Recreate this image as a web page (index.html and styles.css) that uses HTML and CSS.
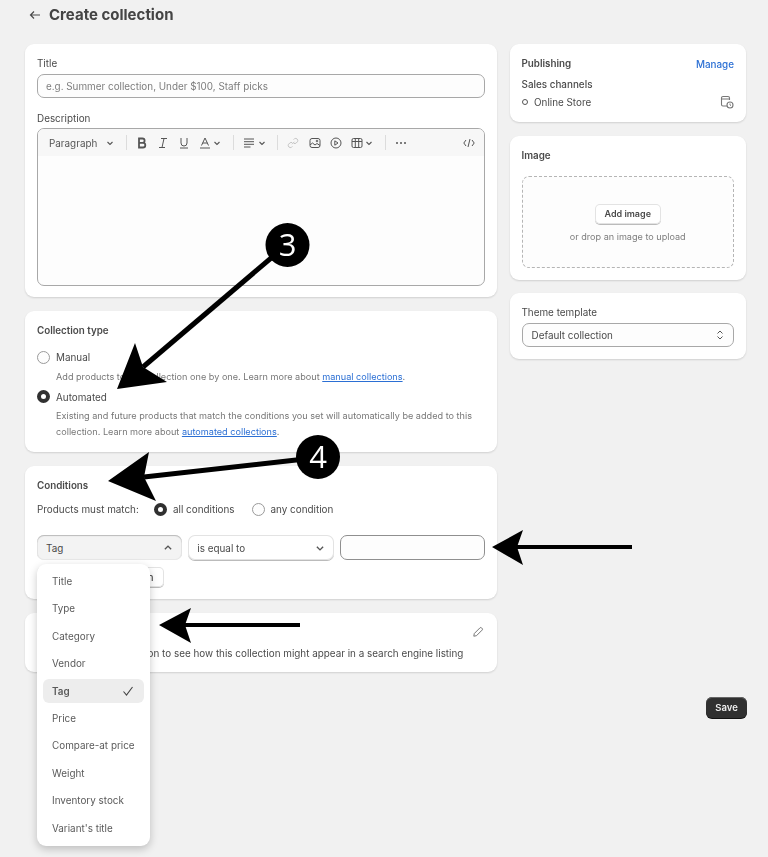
FILE: index.html
```html
<!DOCTYPE html>
<html lang="en">
<head>
<meta charset="utf-8">
<title>Create collection</title>
<link rel="stylesheet" href="styles.css">
</head>
<body>
<div class="page">
  <header class="head">
    <svg class="back" viewBox="0 0 12 12" width="12" height="12"><path d="M11 6H1.5M5 2.5 1.500 6 5 9.500" fill="none" stroke="#4a4a4a" stroke-width="1.200"/></svg>
    <h1>Create collection</h1>
  </header>
  <div class="columns">
    <main class="col">
      <section class="card card-main">
        <label class="label">Title</label>
        <div class="input placeholder">e.g. Summer collection, Under $100, Staff picks</div>
        <label class="label label-desc">Description</label>
        <div class="editor">
          <div class="toolbar">
            <span class="para">Paragraph</span>
            <svg class="chev para-chev" viewBox="0 0 8 8"><path d="M1.500 3 4 5.500 6.500 3"/></svg>
            <i class="sep sep1"></i>
            <svg class="ico" viewBox="0 0 12 12"><path class="bold" d="M3 1.500h3.400a2.200 2.200 0 0 1 0 4.400H3zM3 5.900h4a2.300 2.300 0 0 1 0 4.600H3z"/></svg>
            <svg class="ico" viewBox="0 0 12 12"><path d="M4 1.500h6M2 10.500h6M7 1.500l-2 9"/></svg>
            <svg class="ico" viewBox="0 0 12 12"><path d="M3 1v5a3 3 0 0 0 6 0V1M2 11h8"/></svg>
            <svg class="ico ico-a" viewBox="0 0 12 12"><path d="M2.500 8.500 6 1l3.500 7.500M3.600 6h4.800M1 11h10"/></svg>
            <svg class="chev" viewBox="0 0 8 8"><path d="M1.500 3 4 5.500 6.500 3"/></svg>
            <i class="sep sep2"></i>
            <svg class="ico ico-align" viewBox="0 0 12 12"><path d="M1 2h10M1 4.700h10M1 7.300h10M1 10h6.500"/></svg>
            <svg class="chev" viewBox="0 0 8 8"><path d="M1.500 3 4 5.500 6.500 3"/></svg>
            <i class="sep sep3"></i>
            <svg class="ico ico-off" viewBox="0 0 12 12"><path d="M5 7.200l2.400-2.400M6.600 2.600l.9-.9a2.200 2.200 0 0 1 3 3L9.200 6a2.200 2.200 0 0 1-2.400.4M5.400 9.400l-.9.9a2.200 2.200 0 0 1-3-3L2.800 6a2.200 2.200 0 0 1 2.400-.4"/></svg>
            <svg class="ico" viewBox="0 0 12 12"><rect x="1" y="1.500" width="10" height="9" rx="2"/><path d="M1 8l2.500-2 2.500 2 2-1.500L11 8.500"/><circle cx="8" cy="4" r=".8"/></svg>
            <svg class="ico" viewBox="0 0 12 12"><circle cx="6" cy="6" r="5"/><path d="M4.800 3.800 8 6 4.800 8.200z"/></svg>
            <svg class="ico ico-table" viewBox="0 0 12 12"><rect x="1" y="1.500" width="10" height="9" rx="1.500"/><path d="M1 4.500h10M4.300 1.500v9M7.700 1.500v9"/></svg>
            <svg class="chev" viewBox="0 0 8 8"><path d="M1.500 3 4 5.500 6.500 3"/></svg>
            <i class="sep sep4"></i>
            <svg class="ico" viewBox="0 0 12 12"><circle class="dot" cx="2" cy="6" r="1"/><circle class="dot" cx="6" cy="6" r="1"/><circle class="dot" cx="10" cy="6" r="1"/></svg>
            <svg class="ico code" viewBox="0 0 12 12"><path d="M3 3 .8 6 3 9M9 3l2.200 3L9 9M7 2 5 10"/></svg>
          </div>
          <div class="editor-body"></div>
        </div>
      </section>

      <section class="card card-type">
        <h2>Collection type</h2>
        <div class="radio-row first"><span class="radio"></span><span class="radio-text">Manual</span></div>
        <p class="help">Add products to this collection one by one. Learn more about <a href="#">manual collections</a>.</p>
        <div class="radio-row"><span class="radio on"></span><span class="radio-text">Automated</span></div>
        <p class="help">Existing and future products that match the conditions you set will automatically be added to this collection. Learn more about <a href="#">automated collections</a>.</p>
      </section>

      <section class="card card-cond">
        <h2>Conditions</h2>
        <div class="match">
          <span class="match-label">Products must match:</span>
          <span class="radio on"></span><span class="radio-text">all conditions</span>
          <span class="radio any"></span><span class="radio-text">any condition</span>
        </div>
        <div class="cond-row">
          <div class="select open"><span>Tag</span><svg class="chev big" viewBox="0 0 8 8"><path d="M1.500 5 4 2.500 6.500 5"/></svg></div>
          <div class="select"><span>is equal to</span><svg class="chev big" viewBox="0 0 8 8"><path d="M1.500 3 4 5.500 6.500 3"/></svg></div>
          <div class="input cond-input"></div>
          <ul class="menu">
            <li>Title</li><li>Type</li><li>Category</li><li>Vendor</li>
            <li class="active">Tag<svg viewBox="0 0 12 12" width="12" height="12"><path d="M1.500 6.500 4.500 10 10.500 2" fill="none" stroke="#444" stroke-width="1.100"/></svg></li>
            <li>Price</li><li>Compare-at price</li><li>Weight</li><li>Inventory stock</li><li>Variant's title</li>
          </ul>
        </div>
        <button class="btn add-cond">Add another condition</button>
      </section>

      <section class="card card-seo">
        <div class="seo-head">
          <h2>Search engine listing</h2>
          <svg class="pencil" viewBox="0 0 12 12" width="12" height="12"><path d="M1.800 10.200l.5-2.700 5.600-5.600a1.200 1.200 0 0 1 1.700 0l.5.5a1.200 1.200 0 0 1 0 1.700L4.500 9.700z" fill="none" stroke="#777" stroke-width="1"/></svg>
        </div>
        <p class="seo-text">Add a title and description to see how this collection might appear in a search engine listing</p>
      </section>
    </main>

    <aside class="col">
      <section class="card card-pub">
        <div class="pub-head"><h2>Publishing</h2><a class="manage" href="#">Manage</a></div>
        <div class="channels">Sales channels</div>
        <div class="store">
          <span class="store-dot"></span><span>Online Store</span>
          <svg class="cal" viewBox="0 0 14 14" width="14" height="14"><path d="M7 11H3a1.500 1.500 0 0 1-1.500-1.500V3A1.500 1.500 0 0 1 3 1.500h5A1.500 1.500 0 0 1 9.500 3v2M1.500 4h8" fill="none" stroke="#777" stroke-width="1.100"/><circle cx="10" cy="10" r="3" fill="none" stroke="#777" stroke-width="1.100"/><path d="M10 8.500V10l1 .7" fill="none" stroke="#777" stroke-width=".9"/></svg>
        </div>
      </section>
      <section class="card card-img">
        <h2>Image</h2>
        <div class="drop">
          <button class="btn add-img">Add image</button>
          <span class="drop-text">or drop an image to upload</span>
        </div>
      </section>
      <section class="card card-theme">
        <label class="label">Theme template</label>
        <div class="input theme-select"><span>Default collection</span>
          <svg viewBox="0 0 8 12" width="8" height="12"><path d="M1.500 4.500 4 2l2.500 2.500M1.500 7.500 4 10l2.500-2.500" fill="none" stroke="#555" stroke-width="1"/></svg>
        </div>
      </section>
    </aside>
  </div>
  <div class="actions"><button class="save">Save</button></div>

  <svg class="notes" viewBox="0 0 768 857" width="768" height="857">
    <path class="shaft" d="M143 367 277 253"/>
    <path d="M117 389 135 343 143 367 167 382z"/>
    <circle cx="287.500" cy="245" r="22"/>
    <text x="287.500" y="256" class="num">3</text>
    <path class="shaft" d="M144 477 305 459"/>
    <path d="M108 481 149 452 144 477 156 501z"/>
    <circle cx="318" cy="457" r="22"/>
    <text x="318" y="468" class="num">4</text>
    <path class="shaft thin" d="M517 547H632"/>
    <path d="M492 547 523 530 517 547 523 565z"/>
    <path class="shaft thin" d="M185 625H300"/>
    <path d="M159 625 191 608 185 625 191 643z"/>
  </svg>
</div>
</body>
</html>
```
FILE: styles.css
```css
* { box-sizing: border-box; }
html, body { margin: 0; height: 100%; }
body {
  background: #f1f1f1;
  color: #4a4a4a;
  font: 9.900px/14px Inter, "Liberation Sans", sans-serif;
  overflow: hidden;
}
.page { position: relative; width: 768px; height: 857px; padding: 0 22px 0 25px; filter: blur(0.45px); }
.head { display: flex; align-items: center; height: 44px; padding: 1px 0 15px 4px; }
.back { margin-right: 8px; }
h1 { margin: 0; font-size: 15px; font-weight: 700; line-height: 20px; color: #444; }
h2 { margin: 0 0 -2px; font-size: 9.800px; font-weight: 600; line-height: 16px; color: #4a4a4a; }
.columns { display: flex; gap: 13px; align-items: flex-start; }
.col { display: flex; flex-direction: column; gap: 14px; }
main.col { width: 472px; }
aside.col { width: 236px; gap: 13.500px; }
aside .card { padding-left: 11.500px; padding-right: 12px; }
.card { background: #fff; border-radius: 9px; box-shadow: 0 1px 2px rgba(0,0,0,.14); padding: 12px; }
.label { display: block; line-height: 14px; margin-bottom: 4px; }
.label-desc { margin: 13px 0 3px; }
.input { height: 24px; border: 1px solid #a8a8a8; border-radius: 7px; background: #fdfdfd; padding: 0 8px; line-height: 22px; }
.placeholder { color: #7d7d7d; }
.card-main { height: 253px; }
.editor { height: 158px; border: 1px solid #a8a8a8; border-radius: 7px; overflow: hidden; background: #fdfdfd; }
.toolbar { display: flex; align-items: center; height: 27px; background: #f7f7f7; padding-left: 11px; }
.para { width: 56.500px; color: #555; }
.ico { width: 12px; height: 12px; margin-right: 9.300px; flex: none; fill: none; stroke: #555; stroke-width: 1; }
.ico .dot { fill: #555; stroke: none; }
.ico .bold { stroke-width: 1.800; }
.ico-off { stroke: #c4c4c4; }
.chev { width: 8px; height: 8px; flex: none; fill: none; stroke: #555; stroke-width: 1.100; }
.chev.big { width: 10px; height: 10px; }
.sep { display: block; width: 1px; height: 15px; background: #dcdcdc; flex: none; }
.sep1 { margin: 0 9px 0 12px; }
.sep2 { margin: 0 8.500px 0 12px; }
.sep3 { margin: 0 9.500px 0 11px; }
.sep4 { margin: 0 9px 0 11.500px; }
.ico-a, .ico-table { margin-right: 2px; }
.ico-align { margin-right: 3px; }
.code { margin-left: auto; margin-right: 9px; }
.card-type { height: 141px; }
.radio-row { display: flex; align-items: center; gap: 6px; height: 14px; margin-top: 6px; }
.radio-row.first { margin-top: 13px; }
.radio { display: inline-block; width: 13px; height: 13px; flex: none; border: 1px solid #9a9a9a; border-radius: 50%; background: #fdfdfd; }
.radio.on { border: 4px solid #303030; background: #fff; }
.help { margin: 4.500px 0 0 19px; color: #777; font-size: 9.150px; line-height: 15.300px; }
.help a { color: #2b6fd4; text-decoration: underline; }
.card-cond { height: 133px; }
.match { display: flex; align-items: center; height: 14px; margin-top: 10px; }
.match-label { width: 117px; }
.match .radio-text { margin-left: 6px; }
.any { margin-left: 17px; }
.cond-row { position: relative; display: flex; gap: 6px; margin-top: 19px; }
.select { display: flex; flex: 1; justify-content: space-between; align-items: center; height: 25px; padding: 0 9px; border-radius: 7px; background: #fff; box-shadow: 0 0 0 1px #e3e3e3 inset, 0 1px 0 #bbb; }
.select.open { background: #f3f3f3; box-shadow: 0 1px 1px #bbb inset, 0 0 0 1px #e8e8e8 inset; }
.cond-input { flex: 1; height: 25px; border-color: #8f8f8f; }
.btn { font: 500 9.500px/14px Inter, "Liberation Sans", sans-serif; color: #4a4a4a; background: #fff; border: 0; border-radius: 5px; box-shadow: 0 0 0 1px #e3e3e3 inset, 0 1px 0 #bbb; }
.add-cond { display: block; width: 127px; height: 20px; margin-top: 7px; padding: 0 9px; font-size: 10px; white-space: nowrap; overflow: hidden; }
.menu { position: absolute; left: 0; top: 29px; z-index: 2; width: 113px; height: 282px; margin: 0; padding: 5px 6px; list-style: none; background: #fff; border-radius: 9px; box-shadow: 0 3px 8px rgba(0,0,0,.22); }
.menu li { display: flex; justify-content: space-between; align-items: center; height: 24px; margin-bottom: 3.400px; padding: 0 10px 0 9px; border-radius: 6px; color: #5a5a5a; white-space: nowrap; }
.menu .active { background: #ededed; font-weight: 600; }
.card-seo { height: 59px; }
.seo-head { display: flex; justify-content: space-between; align-items: center; }
.pencil { margin-right: 1px; }
.seo-text { margin: 7px 0 0; }
.card-pub { height: 78px; }
.pub-head { display: flex; justify-content: space-between; }
.manage { color: #2b6fd4; text-decoration: none; font-weight: 500; line-height: 16px; }
.channels { font-weight: 500; margin-top: 5px; }
.store { display: flex; align-items: center; margin-top: 4px; }
.store-dot { width: 6px; height: 6px; border: 1px solid #555; border-radius: 50%; margin-right: 6.500px; }
.cal { margin-left: auto; }
.card-img { height: 144px; }
.drop { display: flex; flex-direction: column; align-items: center; height: 92px; margin-top: 14.500px; padding-top: 26.500px; border: 1px dashed #b5b5b5; border-radius: 7px; background: #fdfdfd; }
.add-img { width: 66px; height: 20px; padding: 0; font-size: 9px; font-weight: 600; }
.drop-text { margin-top: 6px; color: #7d7d7d; font-size: 9.100px; }
.card-theme { height: 66px; }
.theme-select { display: flex; justify-content: space-between; align-items: center; height: 24px; padding: 0 9px; }
.actions { position: absolute; left: 706px; top: 697px; }
.save { display: block; width: 41px; height: 21px; padding: 0; border: 0; border-radius: 6px; background: #303030; color: #eee; font: 600 9.500px/21px Inter, "Liberation Sans", sans-serif; box-shadow: 0 1px 0 #111, 0 1px 0 #666 inset; }
.notes { position: absolute; left: 0; top: 0; z-index: 5; pointer-events: none; }
.shaft { fill: none; stroke: #000; stroke-width: 5; }
.shaft.thin { stroke-width: 4; }
.num { fill: #fff; font: 31px "Open Sans", sans-serif; text-anchor: middle; }
```
